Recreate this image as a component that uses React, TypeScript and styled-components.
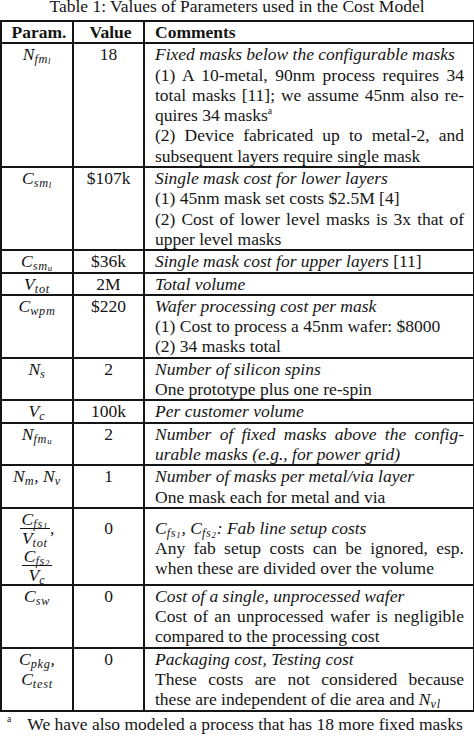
import React from "react";
import styled, { createGlobalStyle } from "styled-components";

const GlobalStyle = createGlobalStyle`
  body {
    margin: 0;
    background: #ffffff;
  }
`;

const Page = styled.div`
  width: 474px;
  height: 736px;
  overflow: hidden;
  font-family: "Liberation Serif", "Times New Roman", serif;
  font-size: 17.5px;
  color: #151515;
`;

const Caption = styled.div`
  margin-top: -4px;
  line-height: 20px;
  text-align: center;
  white-space: nowrap;
`;

const Table = styled.table`
  margin-top: 4px;
  width: 473px;
  table-layout: fixed;
  border-collapse: collapse;
  border: 2px solid #151515;
`;

const Col = styled.col<{ $w: number }>`
  width: ${(p) => p.$w}px;
`;

const HeadCell = styled.th<{ $left?: boolean }>`
  border: 2px solid #151515;
  padding: ${(p) => (p.$left ? "0 9px 0 10px" : "0 0 0 4px")};
  line-height: 20.3px;
  font-weight: bold;
  text-align: ${(p) => (p.$left ? "left" : "center")};
`;

const Cell = styled.td<{ $left?: boolean; $top?: number }>`
  border: 2px solid #151515;
  padding: ${(p) => p.$top || 0}px ${(p) => (p.$left ? "9px 0 10px" : "2px 0 2px")};
  line-height: 20.3px;
  vertical-align: top;
  text-align: ${(p) => (p.$left ? "left" : "center")};
`;

const Line = styled.div<{ $justify?: boolean }>`
  white-space: ${(p) => (p.$justify ? "normal" : "nowrap")};
  text-align: ${(p) => (p.$justify ? "justify" : "left")};
  text-align-last: ${(p) => (p.$justify ? "justify" : "left")};
`;

const Em = styled.span`
  font-style: italic;
`;

const M = styled.span`
  font-style: italic;
  white-space: nowrap;
`;

const Sub = styled.sub`
  font-size: 0.7em;
  vertical-align: -0.25em;
  line-height: 0;
  letter-spacing: 0.06em;
  font-style: italic;
`;

const SubSub = styled.sub`
  font-size: 0.72em;
  vertical-align: -0.15em;
  line-height: 0;
  font-style: italic;
`;

const Sup = styled.sup`
  font-size: 0.55em;
  vertical-align: 0.75em;
  line-height: 0;
`;

const FracStack = styled.div`
  display: flex;
  flex-direction: column;
  align-items: center;
  padding-top: 1px;
`;

const FracRow = styled.div`
  display: flex;
  align-items: center;
  line-height: 18px;
`;

const Frac = styled.span`
  display: inline-flex;
  flex-direction: column;
  align-items: center;
  font-style: italic;
`;

const Num = styled.span`
  padding: 0 2px;
  border-bottom: 1.5px solid #151515;
  line-height: 18px;
`;

const Den = styled.span`
  line-height: 18px;
`;

const Footnote = styled.div`
  margin-top: 3px;
  padding-left: 7px;
  line-height: 19px;
  white-space: nowrap;
`;

const FootMark = styled.sup`
  font-size: 0.55em;
  vertical-align: 0.75em;
  line-height: 0;
  margin-right: 16px;
`;

type Row = {
  param: React.ReactNode;
  value: string;
  top?: number;
  lines: { text: React.ReactNode; justify?: boolean }[];
};

const rows: Row[] = [
  {
    param: (
      <M>
        N
        <Sub>
          fm<SubSub>l</SubSub>
        </Sub>
      </M>
    ),
    value: "18",
    lines: [
      { text: <Em>Fixed masks below the configurable masks</Em> },
      { text: "(1) A 10-metal, 90nm process requires 34", justify: true },
      { text: "total masks [11]; we assume 45nm also re-", justify: true },
      {
        text: (
          <>
            quires 34 masks<Sup>a</Sup>
          </>
        ),
      },
      { text: "(2) Device fabricated up to metal-2, and", justify: true },
      { text: "subsequent layers require single mask" },
    ],
  },
  {
    param: (
      <M>
        C
        <Sub>
          sm<SubSub>l</SubSub>
        </Sub>
      </M>
    ),
    value: "$107k",
    lines: [
      { text: <Em>Single mask cost for lower layers</Em> },
      { text: "(1) 45nm mask set costs $2.5M [4]" },
      { text: "(2) Cost of lower level masks is 3x that of", justify: true },
      { text: "upper level masks" },
    ],
  },
  {
    param: (
      <M>
        C
        <Sub>
          sm<SubSub>u</SubSub>
        </Sub>
      </M>
    ),
    value: "$36k",
    lines: [
      {
        text: (
          <>
            <Em>Single mask cost for upper layers</Em> [11]
          </>
        ),
      },
    ],
  },
  {
    param: (
      <M>
        V<Sub>tot</Sub>
      </M>
    ),
    value: "2M",
    lines: [{ text: <Em>Total volume</Em> }],
  },
  {
    param: (
      <M>
        C<Sub>wpm</Sub>
      </M>
    ),
    value: "$220",
    lines: [
      { text: <Em>Wafer processing cost per mask</Em> },
      { text: "(1) Cost to process a 45nm wafer: $8000" },
      { text: "(2) 34 masks total" },
    ],
  },
  {
    param: (
      <M>
        N<Sub>s</Sub>
      </M>
    ),
    value: "2",
    lines: [
      { text: <Em>Number of silicon spins</Em> },
      { text: "One prototype plus one re-spin" },
    ],
  },
  {
    param: (
      <M>
        V<Sub>c</Sub>
      </M>
    ),
    value: "100k",
    lines: [{ text: <Em>Per customer volume</Em> }],
  },
  {
    param: (
      <M>
        N
        <Sub>
          fm<SubSub>u</SubSub>
        </Sub>
      </M>
    ),
    value: "2",
    lines: [
      {
        text: <Em>Number of fixed masks above the config-</Em>,
        justify: true,
      },
      { text: <Em>urable masks (e.g., for power grid)</Em> },
    ],
  },
  {
    param: (
      <M>
        N<Sub>m</Sub>, N<Sub>v</Sub>
      </M>
    ),
    value: "1",
    lines: [
      { text: <Em>Number of masks per metal/via layer</Em> },
      { text: "One mask each for metal and via" },
    ],
  },
  {
    param: (
      <FracStack>
        <FracRow>
          <Frac>
            <Num>
              C
              <Sub>
                fs<SubSub>1</SubSub>
              </Sub>
            </Num>
            <Den>
              V<Sub>tot</Sub>
            </Den>
          </Frac>
          ,
        </FracRow>
        <FracRow>
          <Frac>
            <Num>
              C
              <Sub>
                fs<SubSub>2</SubSub>
              </Sub>
            </Num>
            <Den>
              V<Sub>c</Sub>
            </Den>
          </Frac>
        </FracRow>
      </FracStack>
    ),
    value: "0",
    top: 9,
    lines: [
      {
        text: (
          <>
            <M>
              C
              <Sub>
                fs<SubSub>1</SubSub>
              </Sub>
              , C
              <Sub>
                fs<SubSub>2</SubSub>
              </Sub>
            </M>
            <Em>: Fab line setup costs</Em>
          </>
        ),
      },
      { text: "Any fab setup costs can be ignored, esp.", justify: true },
      { text: "when these are divided over the volume" },
    ],
  },
  {
    param: (
      <M>
        C<Sub>sw</Sub>
      </M>
    ),
    value: "0",
    lines: [
      { text: <Em>Cost of a single, unprocessed wafer</Em> },
      { text: "Cost of an unprocessed wafer is negligible", justify: true },
      { text: "compared to the processing cost" },
    ],
  },
  {
    param: (
      <>
        <M>
          C<Sub>pkg</Sub>,
        </M>
        <br />
        <M>
          C<Sub>test</Sub>
        </M>
      </>
    ),
    value: "0",
    lines: [
      { text: <Em>Packaging cost, Testing cost</Em> },
      { text: "These costs are not considered because", justify: true },
      {
        text: (
          <>
            these are independent of die area and{" "}
            <M>
              N<Sub>vl</Sub>
            </M>
          </>
        ),
      },
    ],
  },
];

const App = () => {
  return (
    <Page>
      <GlobalStyle />
      <Caption>Table 1: Values of Parameters used in the Cost Model</Caption>
      <Table>
        <colgroup>
          <Col $w={72} />
          <Col $w={71} />
          <Col $w={330} />
        </colgroup>
        <thead>
          <tr>
            <HeadCell>Param.</HeadCell>
            <HeadCell>Value</HeadCell>
            <HeadCell $left>Comments</HeadCell>
          </tr>
        </thead>
        <tbody>
          {rows.map((row, i) => (
            <tr key={i}>
              <Cell>{row.param}</Cell>
              <Cell $top={row.top}>{row.value}</Cell>
              <Cell $left $top={row.top}>
                {row.lines.map((line, j) => (
                  <Line key={j} $justify={line.justify}>
                    {line.text}
                  </Line>
                ))}
              </Cell>
            </tr>
          ))}
        </tbody>
      </Table>
      <Footnote>
        <FootMark>a</FootMark>We have also modeled a process that has 18 more
        fixed masks
      </Footnote>
    </Page>
  );
};

export default App;
